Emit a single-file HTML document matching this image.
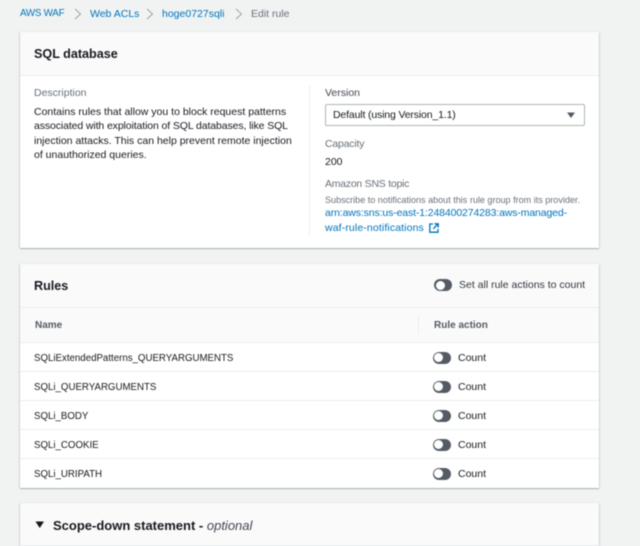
<!DOCTYPE html>
<html><head><meta charset="utf-8">
<style>
html,body{margin:0;padding:0;overflow:hidden;width:640px;height:546px;}
body{background:#f1f3f3;position:relative;font-family:"Liberation Sans",sans-serif;color:#16191f;}
#w{position:absolute;left:0;top:0;width:640px;height:546px;overflow:hidden;filter:blur(.4px);}
.t{position:absolute;white-space:nowrap;font-size:10.5px;line-height:14px;}
.a{color:#0073bb;}
.g{color:#687078;}
.c{position:absolute;left:20px;width:579px;background:#fff;box-shadow:0 1px 1px rgba(0,28,36,.3),1px 0 1px rgba(0,28,36,.1),-1px 0 1px rgba(0,28,36,.1);}
.h{position:absolute;left:0;width:579px;background:#fafafa;}
.l{position:absolute;background:#eaeded;}
.b{font-weight:bold;}
.n{font-size:9.7px;color:#16191f;}
.tg{position:absolute;width:18px;height:12px;border-radius:6px;background:#545b64;}
.tg:after{content:"";position:absolute;left:1.5px;top:1.5px;width:9px;height:9px;border-radius:50%;background:#fff;}
svg{position:absolute;}
</style></head><body><div id="w">

<div class="t a" style="left:20px;top:7px;font-size:9.8px;letter-spacing:-.25px;">AWS WAF</div>
<svg style="left:73px;top:8px;" width="9" height="12" viewBox="0 0 9 12"><path d="M2 1 L7.5 6 L2 11" fill="none" stroke="#95a5a6" stroke-width="1"/></svg>
<div class="t a" style="left:90px;top:7px;">Web ACLs</div>
<svg style="left:145px;top:8px;" width="9" height="12" viewBox="0 0 9 12"><path d="M2 1 L7.5 6 L2 11" fill="none" stroke="#95a5a6" stroke-width="1"/></svg>
<div class="t a" style="left:162px;top:7px;">hoge0727sqli</div>
<svg style="left:234px;top:8px;" width="9" height="12" viewBox="0 0 9 12"><path d="M2 1 L7.5 6 L2 11" fill="none" stroke="#95a5a6" stroke-width="1"/></svg>
<div class="t g" style="left:251px;top:7px;">Edit rule</div>

<div class="c" style="top:32px;height:216px;">
  <div class="h" style="top:0;height:43px;border-bottom:1px solid #eaeded;"></div>
  <div class="l" style="left:289px;top:54px;width:1px;height:150px;"></div>
</div>
<div class="t b" style="left:34px;top:46px;font-size:12.6px;line-height:16px;">SQL database</div>
<div class="t g" style="left:34px;top:86px;">Description</div>
<div class="t" style="left:34px;top:105px;color:#16191f;">Contains rules that allow you to block request patterns</div>
<div class="t" style="left:34px;top:119px;letter-spacing:-.11px;">associated with exploitation of SQL databases, like SQL</div>
<div class="t" style="left:34px;top:134px;">injection attacks. This can help prevent remote injection</div>
<div class="t" style="left:34px;top:148px;">of unauthorized queries.</div>

<div class="t" style="left:325px;top:86px;color:#414750;">Version</div>
<div style="position:absolute;left:325px;top:104px;width:258px;height:20px;border:1px solid #aab7b8;border-radius:2px;background:#fff;"></div>
<div class="t" style="left:333px;top:108px;letter-spacing:-.15px;">Default (using Version_1.1)</div>
<svg style="left:567px;top:112px;" width="9" height="7" viewBox="0 0 9 7"><path d="M0 0.5 H8 L4 6 Z" fill="#545b64"/></svg>
<div class="t g" style="left:325px;top:137px;letter-spacing:-.2px;">Capacity</div>
<div class="t" style="left:325px;top:155px;">200</div>
<div class="t g" style="left:325px;top:177px;letter-spacing:-.25px;">Amazon SNS topic</div>
<div class="t g" style="left:325px;top:193px;font-size:9.05px;">Subscribe to notifications about this rule group from its provider.</div>
<div class="t a" style="left:325px;top:206px;letter-spacing:-.13px;">arn:aws:sns:us-east-1:248400274283:aws-managed-</div>
<div class="t a" style="left:325px;top:221px;letter-spacing:.12px;">waf-rule-notifications</div>
<svg style="left:429px;top:223px;" width="10" height="10" viewBox="0 0 10 10"><path d="M4 1 H.8 V9.2 H9 V6 M5.5 .8 H9.2 V4.5 M9 1 L4.2 5.8" fill="none" stroke="#0073bb" stroke-width="1.3"/></svg>

<div class="c" style="top:264px;height:224px;">
  <div class="h" style="top:0;height:43px;border-bottom:1px solid #eaeded;"></div>
  <div class="h" style="top:44px;height:34px;border-bottom:1px solid #eaeded;"></div>
  <div class="l" style="left:398px;top:52px;width:1px;height:18px;"></div>
  <div class="l" style="left:0;top:107px;width:579px;height:1px;"></div>
  <div class="l" style="left:0;top:136px;width:579px;height:1px;"></div>
  <div class="l" style="left:0;top:165px;width:579px;height:1px;"></div>
  <div class="l" style="left:0;top:194px;width:579px;height:1px;"></div>
</div>
<div class="t b" style="left:34px;top:278px;font-size:12.6px;line-height:16px;">Rules</div>
<div class="tg" style="left:434px;top:279px;"></div>
<div class="t" style="left:459px;top:278px;color:#30363d;">Set all rule actions to count</div>
<div class="t b" style="left:35px;top:319px;font-size:10px;color:#545b64;">Name</div>
<div class="t b" style="left:434px;top:319px;font-size:10px;color:#545b64;">Rule action</div>

<div class="t n" style="left:34px;top:352px;">SQLiExtendedPatterns_QUERYARGUMENTS</div>
<div class="tg" style="left:432.5px;top:351.5px;"></div><div class="t" style="left:458px;top:351px;">Count</div>
<div class="t n" style="left:34px;top:381px;">SQLi_QUERYARGUMENTS</div>
<div class="tg" style="left:432.5px;top:380.5px;"></div><div class="t" style="left:458px;top:380px;">Count</div>
<div class="t n" style="left:34px;top:410px;">SQLi_BODY</div>
<div class="tg" style="left:432.5px;top:409.5px;"></div><div class="t" style="left:458px;top:409px;">Count</div>
<div class="t n" style="left:34px;top:439px;">SQLi_COOKIE</div>
<div class="tg" style="left:432.5px;top:438.5px;"></div><div class="t" style="left:458px;top:438px;">Count</div>
<div class="t n" style="left:34px;top:468px;">SQLi_URIPATH</div>
<div class="tg" style="left:432.5px;top:467.5px;"></div><div class="t" style="left:458px;top:467px;">Count</div>

<div class="c" style="top:503px;height:60px;">
  <div class="h" style="top:0;height:42px;border-bottom:1px solid #eaeded;"></div>
</div>
<svg style="left:35px;top:521px;" width="10" height="8" viewBox="0 0 10 8"><path d="M0.5 0.5 H9 L4.75 7 Z" fill="#16191f"/></svg>
<div class="t b" style="left:53px;top:518px;font-size:13px;line-height:16px;">Scope-down statement - <i style="font-weight:normal;color:#414750;">optional</i></div>

</div></body></html>
